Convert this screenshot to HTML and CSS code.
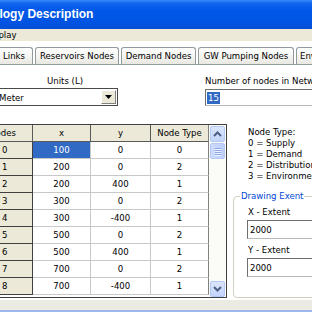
FILE: index.html
```html
<!DOCTYPE html>
<html lang="en">
<head>
    <meta charset="UTF-8">
    <meta name="viewport" content="width=device-width, initial-scale=1.0">
    <title>Topology Description</title>
    <link rel="stylesheet" href="styles.css">
</head>
<body>
    <div class="titlebar"><span class="title">Topology Description</span></div>
    <div class="menubar"><span class="menu-item">Display</span></div>

    <div class="tabstrip">
        <div class="tab tab-links">Links</div>
        <div class="tab tab-res">Reservoirs Nodes</div>
        <div class="tab tab-dem">Demand Nodes</div>
        <div class="tab tab-gw">GW Pumping Nodes</div>
        <div class="tab tab-env">Environment Nodes</div>
    </div>

    <div class="page">
        <div class="top-row">
            <div class="units">
                <div class="units-label">Units (L)</div>
                <div class="combo">
                    <span class="combo-text">Meter</span>
                    <span class="combo-btn">
                        <svg width="7" height="4" viewBox="0 0 7 4"><path d="M0 0H7L3.5 4Z" fill="#000"/></svg>
                    </span>
                </div>
            </div>
            <div class="count">
                <div class="count-label">Number of nodes in Network</div>
                <div class="textbox"><span class="selected">15</span></div>
            </div>
        </div>

        <div class="main-row">
            <div class="grid">
                <table class="nodes">
                    <colgroup>
                        <col class="c-id"><col class="c-x"><col class="c-y"><col class="c-type">
                    </colgroup>
                    <thead>
                        <tr><th>Nodes</th><th>x</th><th>y</th><th>Node Type</th></tr>
                    </thead>
                    <tbody id="rows"></tbody>
                </table>
                <div class="vscroll">
                    <div class="sb-btn">
                        <svg width="9" height="6" viewBox="0 0 9 6"><path d="M1 5L4.5 1.5L8 5" fill="none" stroke="#4d6185" stroke-width="2"/></svg>
                    </div>
                    <div class="sb-thumb">
                        <span></span><span></span><span></span><span></span>
                    </div>
                    <div class="sb-track"></div>
                    <div class="sb-btn">
                        <svg width="9" height="6" viewBox="0 0 9 6"><path d="M1 1L4.5 4.5L8 1" fill="none" stroke="#4d6185" stroke-width="2"/></svg>
                    </div>
                </div>
            </div>

            <div class="side">
                <div class="legend-text">
                    <div>Node Type:</div>
                    <div>0 = Supply</div>
                    <div>1 = Demand</div>
                    <div>2 = Distribution</div>
                    <div>3 = Environment</div>
                </div>
                <fieldset class="group">
                    <legend>Drawing Exent</legend>
                    <div class="ext-label">X - Extent</div>
                    <div class="textbox ext-box">2000</div>
                    <div class="ext-label second">Y - Extent</div>
                    <div class="textbox ext-box">2000</div>
                </fieldset>
            </div>
        </div>
    </div>

    <div class="statusbar"></div>
    <div class="frame-bottom"></div>

    <script>
        const nodes = [
            [0, 100, 0, 0],
            [1, 200, 0, 2],
            [2, 200, 400, 1],
            [3, 300, 0, 2],
            [4, 300, -400, 1],
            [5, 500, 0, 2],
            [6, 500, 400, 1],
            [7, 700, 0, 2],
            [8, 700, -400, 1]
        ];

        const tbody = document.getElementById("rows");
        nodes.forEach((n, i) => {
            const tr = document.createElement("tr");
            tr.innerHTML =
                `<td class="rh">${n[0]}</td>` +
                `<td${i === 0 ? ' class="current"' : ''}>${n[1]}</td>` +
                `<td>${n[2]}</td>` +
                `<td class="last">${n[3]}</td>`;
            tbody.appendChild(tr);
        });
    </script>
</body>
</html>
```

FILE: styles.css
```css
html, body {
    margin: 0;
    width: 312px;
    height: 312px;
    overflow: hidden;
}
body {
    font-family: "DejaVu Sans Condensed", "DejaVu Sans", sans-serif;
    font-stretch: condensed;
    font-size: 9.5px;
    color: #000;
    background-color: #fff;
}

.titlebar {
    height: 29px;
    line-height: 29px;
    white-space: nowrap;
    background: linear-gradient(to bottom, #3c8cf8 0px, #1466f0 3px, #0058e8 10px, #0054e3 22px, #0a4fd6 29px);
}
.title {
    display: inline-block;
    margin-left: -29px;
    color: #fff;
    font-family: "Liberation Sans", sans-serif;
    font-weight: bold;
    font-size: 12px;
}

.menubar {
    height: 12px;
    line-height: 12px;
    background-color: #ece9d8;
    white-space: nowrap;
}
.menu-item {
    display: inline-block;
    margin-left: -15px;
}

.tabstrip {
    display: flex;
    gap: 2px;
    padding-top: 6px;
    height: 17px;
    border-bottom: 1px solid #919b9c;
    white-space: nowrap;
}
.tab {
    box-sizing: border-box;
    flex: none;
    height: 17px;
    line-height: 15px;
    text-align: center;
    border: 1px solid #919b9c;
    border-bottom: none;
    border-radius: 3px 3px 0 0;
    background: linear-gradient(to bottom, #fff, #f3f3ef 60%, #e8e7e1);
}
.tab-links { width: 37px; margin-left: -4px; text-align: left; padding-left: 6px; }
.tab-res { width: 84px; }
.tab-dem { width: 75px; }
.tab-gw { width: 96px; }
.tab-env { width: 96px; text-align: left; padding-left: 3px; }

.page {
    padding-top: 10px;
    box-sizing: border-box;
    height: 234px;
}

.top-row {
    display: flex;
    height: 30px;
}
.units {
    flex: none;
    margin-left: -20px;
    width: 138px;
}
.units-label {
    height: 12px;
    line-height: 12px;
    padding-left: 67px;
}
.combo {
    margin-top: 1px;
    height: 18px;
    box-sizing: border-box;
    border: 1px solid #4a4a4a;
    display: flex;
    align-items: center;
    background-color: #fff;
}
.combo-text {
    flex: 1;
    padding-left: 18px;
}
.combo-btn {
    width: 15px;
    height: 14px;
    margin-right: 1px;
    box-sizing: border-box;
    border: 1px solid;
    border-color: #fff #808080 #808080 #fff;
    background-color: #ece9d8;
    display: flex;
    align-items: center;
    justify-content: center;
}

.count {
    flex: none;
    margin-left: 87px;
    width: 150px;
}
.count-label {
    height: 12px;
    line-height: 12px;
    white-space: nowrap;
}
.textbox {
    box-sizing: border-box;
    height: 17px;
    margin-top: 2px;
    border: 1px solid;
    border-color: #6f6f6f #b8b8b8 #b8b8b8 #6f6f6f;
    background-color: #fff;
    line-height: 15px;
    padding-left: 1px;
}
.selected {
    display: inline-block;
    padding: 0 1px;
    line-height: 12px;
    background-color: #316ac5;
    color: #fff;
}

.main-row {
    display: flex;
    margin-top: 19px;
}

.grid {
    flex: none;
    display: flex;
    margin-left: -27px;
    width: 254px;
    height: 174px;
    box-sizing: border-box;
    border: 1px solid #404040;
    border-left: none;
}
.nodes {
    table-layout: fixed;
    width: 236px;
    border-collapse: separate;
    border-spacing: 0;
    align-self: flex-start;
}
.c-id { width: 60px; }
.c-x { width: 58px; }
.c-y { width: 60px; }
.c-type { width: 58px; }
.nodes th,
.nodes td {
    height: 16px;
    padding: 0;
    line-height: 16px;
    text-align: center;
    font-weight: normal;
    white-space: nowrap;
    border-right: 1px solid #c8c8c8;
    border-bottom: 1px solid #c8c8c8;
}
.nodes th {
    background-color: #ece9d8;
    border-color: #5a5a5a;
}
.nodes td.rh {
    text-align: left;
    padding-left: 29px;
    background-color: #ece9d8;
    border-color: #404040;
}
.nodes td.current {
    background-color: #316ac5;
    color: #fff;
}
.nodes th:last-child,
.nodes td.last {
    border-right-color: #808080;
}

.vscroll {
    width: 17px;
    display: flex;
    flex-direction: column;
    padding-top: 1px;
    background-color: #fbfbf8;
}
.sb-btn {
    height: 16px;
    margin: 0 1px;
    box-sizing: border-box;
    border: 1px solid #b4c8f6;
    border-radius: 2px;
    background: linear-gradient(to bottom, #dbe6fe, #c2d4fc);
    display: flex;
    align-items: center;
    justify-content: center;
}
.sb-thumb {
    height: 16px;
    margin: 1px 1px 0;
    box-sizing: border-box;
    border: 1px solid #b4c8f6;
    border-radius: 2px;
    background: linear-gradient(to right, #cddcfd, #bccffb);
    display: flex;
    flex-direction: column;
    align-items: center;
    justify-content: center;
    gap: 1px;
}
.sb-thumb span {
    width: 6px;
    height: 1px;
    background-color: #8ca6e6;
    box-shadow: 0 1px 0 #eef3ff;
}
.sb-track {
    flex: 1;
}

.side {
    margin-left: 6px;
    flex: none;
    width: 130px;
}
.legend-text {
    padding-left: 15px;
    padding-top: 2px;
    line-height: 11px;
    white-space: nowrap;
}
.group {
    margin: 9px 0 0;
    width: 120px;
    height: 108px;
    box-sizing: border-box;
    padding: 0 0 0 14px;
    border: 1px solid #d0d0bf;
    border-radius: 4px;
}
.group legend {
    margin-left: -8px;
    padding: 0 1px;
    line-height: 12px;
    color: #0046d5;
}
.ext-label {
    margin-top: 4px;
    height: 12px;
    line-height: 12px;
}
.ext-label.second {
    margin-top: 5px;
}
.ext-box {
    margin-left: -1px;
    height: 19px;
    line-height: 17px;
    padding-left: 2px;
}

.statusbar {
    height: 10px;
    background-color: #ecebe3;
    border-top: 1px solid #fff;
}
.frame-bottom {
    height: 4px;
    background-color: #9db8ee;
}
```
